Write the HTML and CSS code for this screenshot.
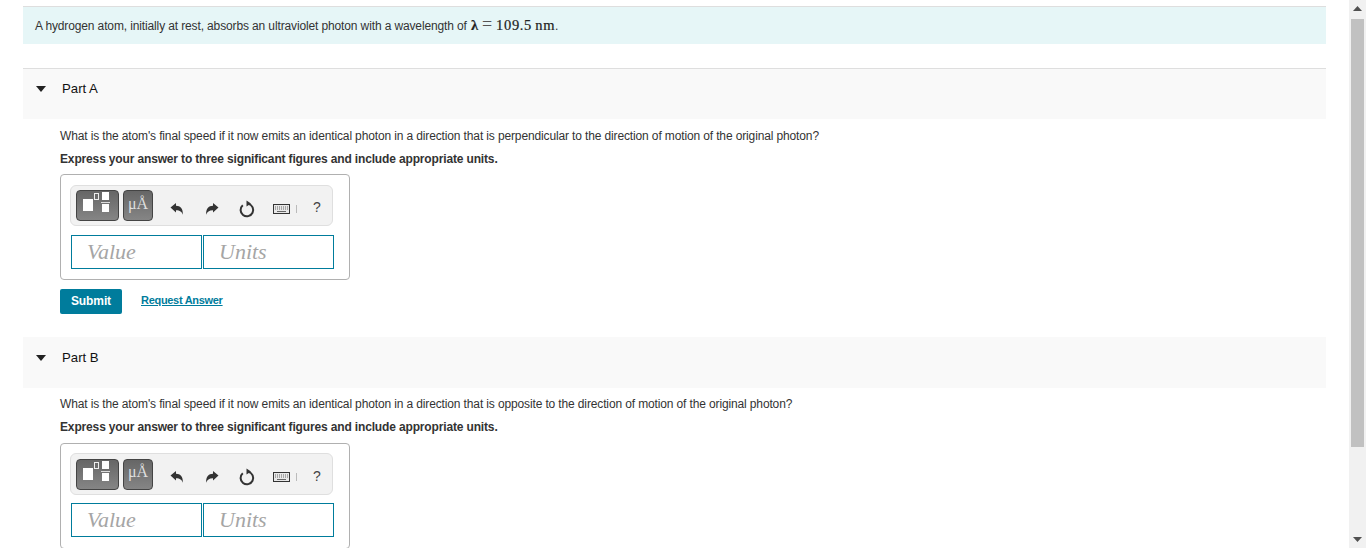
FILE: index.html
```html
<!DOCTYPE html>
<html lang="en">
<head>
<meta charset="utf-8">
<title>Hydrogen atom problem</title>
<link rel="stylesheet" href="styles.css">
</head>
<body>
<div class="page">
  <main class="content">
    <div class="intro">A hydrogen atom, initially at rest, absorbs an ultraviolet photon with a wavelength of <span class="math"><span class="lambda">λ</span> <span class="eq">=</span> 109.5 nm</span>.</div>

    <section class="part part-first">
      <header class="part-head">
        <svg class="caret" width="10" height="6" viewBox="0 0 10 6"><path d="M0 0H10L5 6Z"/></svg>
        <h2 class="part-title">Part A</h2>
      </header>
      <div class="part-body">
        <p class="question">What is the atom's final speed if it now emits an identical photon in a direction that is perpendicular to the direction of motion of the original photon?</p>
        <p class="instruction">Express your answer to three significant figures and include appropriate units.</p>
        <div class="answer-box">
          <div class="toolbar">
            <button class="tool tool-frac" type="button" aria-label="Templates">
              <svg width="34" height="24" viewBox="0 0 34 24"><rect x="2" y="8" width="10" height="12" fill="#fff"/><rect x="13.500" y="2.500" width="4" height="6" fill="none" stroke="#eee"/><rect x="21" y="1" width="7" height="8" fill="#fff"/><rect x="20" y="11" width="9" height="1" fill="#ddd"/><rect x="21" y="13" width="7" height="8" fill="#fff"/></svg>
            </button>
            <button class="tool tool-unit" type="button">μÅ</button>
            <svg class="ico ico-undo" width="14" height="14" viewBox="0 0 14 14"><path d="M0.500 5.500L6 1V3.800C10.500 3.800 13.200 6.500 12.800 12.800C11.800 9.800 10 8.300 6 8.300V10.500Z" fill="#333"/></svg>
            <svg class="ico ico-redo" width="14" height="14" viewBox="0 0 14 14"><path d="M13.500 5.500L8 1V3.800C3.500 3.800 0.800 6.500 1.200 12.800C2.200 9.800 4 8.300 8 8.300V10.500Z" fill="#333"/></svg>
            <svg class="ico ico-reset" width="16" height="18" viewBox="0 0 16 18"><path d="M9.500 3.900A6.300 6.300 0 1 1 3.800 5.200" fill="none" stroke="#333" stroke-width="2"/><path d="M7.500 0.500L12 3.500L7.500 6.500Z" fill="#333"/></svg>
            <svg class="ico ico-kbd" width="17" height="10" viewBox="0 0 17 10"><rect x="0.500" y="0.500" width="16" height="9" fill="#e8e8e8" stroke="#333"/><path d="M2 3H15M2 5H15" stroke="#666" stroke-dasharray="1 1"/><path d="M4 7.500H13" stroke="#666"/></svg>
            <span class="sep"></span>
            <span class="help">?</span>
          </div>
          <div class="fields">
            <div class="field">Value</div>
            <div class="field">Units</div>
          </div>
        </div>
        <div class="actions">
          <button class="submit" type="button">Submit</button>
          <a class="request" href="#">Request Answer</a>
        </div>
      </div>
    </section>

    <section class="part part-second">
      <header class="part-head">
        <svg class="caret" width="10" height="6" viewBox="0 0 10 6"><path d="M0 0H10L5 6Z"/></svg>
        <h2 class="part-title">Part B</h2>
      </header>
      <div class="part-body">
        <p class="question">What is the atom's final speed if it now emits an identical photon in a direction that is opposite to the direction of motion of the original photon?</p>
        <p class="instruction">Express your answer to three significant figures and include appropriate units.</p>
        <div class="answer-box">
          <div class="toolbar">
            <button class="tool tool-frac" type="button" aria-label="Templates">
              <svg width="34" height="24" viewBox="0 0 34 24"><rect x="2" y="8" width="10" height="12" fill="#fff"/><rect x="13.500" y="2.500" width="4" height="6" fill="none" stroke="#eee"/><rect x="21" y="1" width="7" height="8" fill="#fff"/><rect x="20" y="11" width="9" height="1" fill="#ddd"/><rect x="21" y="13" width="7" height="8" fill="#fff"/></svg>
            </button>
            <button class="tool tool-unit" type="button">μÅ</button>
            <svg class="ico ico-undo" width="14" height="14" viewBox="0 0 14 14"><path d="M0.500 5.500L6 1V3.800C10.500 3.800 13.200 6.500 12.800 12.800C11.800 9.800 10 8.300 6 8.300V10.500Z" fill="#333"/></svg>
            <svg class="ico ico-redo" width="14" height="14" viewBox="0 0 14 14"><path d="M13.500 5.500L8 1V3.800C3.500 3.800 0.800 6.500 1.200 12.800C2.200 9.800 4 8.300 8 8.300V10.500Z" fill="#333"/></svg>
            <svg class="ico ico-reset" width="16" height="18" viewBox="0 0 16 18"><path d="M9.500 3.900A6.300 6.300 0 1 1 3.800 5.200" fill="none" stroke="#333" stroke-width="2"/><path d="M7.500 0.500L12 3.500L7.500 6.500Z" fill="#333"/></svg>
            <svg class="ico ico-kbd" width="17" height="10" viewBox="0 0 17 10"><rect x="0.500" y="0.500" width="16" height="9" fill="#e8e8e8" stroke="#333"/><path d="M2 3H15M2 5H15" stroke="#666" stroke-dasharray="1 1"/><path d="M4 7.500H13" stroke="#666"/></svg>
            <span class="sep"></span>
            <span class="help">?</span>
          </div>
          <div class="fields">
            <div class="field">Value</div>
            <div class="field">Units</div>
          </div>
        </div>
      </div>
    </section>
  </main>
  <aside class="scrollbar" aria-hidden="true">
    <svg width="9" height="5" viewBox="0 0 9 5"><path d="M4.500 0L9 5H0Z" fill="#505050"/></svg>
    <div class="thumb"></div>
    <svg width="9" height="5" viewBox="0 0 9 5"><path d="M0 0H9L4.500 5Z" fill="#505050"/></svg>
  </aside>
</div>
</body>
</html>
```

FILE: styles.css
```css
* { box-sizing: border-box; }
html, body { margin: 0; padding: 0; height: 100%; overflow: hidden; background: #fff; }
body { font-family: "Liberation Sans", Arial, sans-serif; font-size: 12px; color: #333; }

.page { display: flex; height: 548px; }
.content { flex: 1; min-width: 0; height: 548px; overflow: hidden; padding: 6px 23px 0 23px; }

.intro { height: 38px; line-height: 38px; padding-left: 12px; background: #e6f6f7; border-top: 1px solid #dedede; color: #333; letter-spacing: -0.13px; }
.math { font-family: "Liberation Serif", "Times New Roman", serif; font-size: 14.500px; line-height: 1; color: #222; letter-spacing: 0.65px; word-spacing: -1px; -webkit-text-stroke: 0.2px #222; }
.lambda { font-weight: 700; margin-left: 1px; }
.eq { color: #555; -webkit-text-stroke: 0; font-size: 18px; line-height: 1; }

.part-first { margin-top: 24px; }
.part-second { margin-top: 23px; }
.part-head { display: flex; align-items: flex-start; height: 51px; background: #f9f9f9; padding-top: 12px; }
.part-second .part-head { padding-top: 13px; }
.part-first .part-head { border-top: 1px solid #dedede; }
.caret { fill: #222; margin: 5px 0 0 13px; }
.part-title { margin: 0 0 0 16px; font-size: 13.200px; line-height: 15px; font-weight: 400; color: #111; }

.part-body { padding: 9px 0 0 37px; }
.part-first .part-body { padding-top: 10px; }
.question { margin: 0; line-height: 15px; color: #333; letter-spacing: -0.133px; }
.instruction { margin: 8px 0 0; line-height: 15px; font-weight: 700; color: #333; letter-spacing: -0.15px; }

.answer-box { width: 290px; height: 106px; margin-top: 8px; padding: 10px 0 0 9px; border: 1px solid #b0b0b0; border-radius: 4px; background: #fff; }
.part-first .answer-box { margin-top: 7px; }
.part-second .answer-box { padding-top: 9px; }
.toolbar { display: flex; align-items: center; width: 263px; height: 41px; padding-left: 5px; background: #f2f2f2; border: 1px solid #dfdfdf; border-radius: 6px; }
.part-second .toolbar { height: 42px; }
.tool { display: flex; align-items: center; justify-content: center; height: 31px; padding: 0; border: 1px solid #444; border-radius: 4px; background: linear-gradient(#666, #858585); color: #dedede; }
.tool-frac { width: 43px; margin-right: 4px; padding-bottom: 5px; }
.tool-unit { width: 30px; font-family: "Liberation Serif", serif; font-size: 16px; padding-bottom: 4px; }
.ico { flex: none; margin-top: 6px; }
.ico-undo { margin-left: 17px; }
.ico-redo { margin-left: 21px; }
.ico-reset { margin-left: 20px; }
.ico-kbd { margin-left: 18px; }
.sep { width: 1px; height: 8px; margin: 6px 0 0 6px; background: #bbb; }
.help { margin: 3px 0 0 16px; font-size: 14px; color: #444; }

.fields { display: flex; gap: 1px; margin-top: 8px; margin-left: 1px; }
.part-first .fields { margin-top: 9px; }
.field { width: 131px; height: 34px; padding-left: 15px; border: 1px solid #007c9c; font-family: "Liberation Serif", serif; font-style: italic; font-size: 22px; line-height: 31px; color: #a5a5a5; }

.actions { display: flex; align-items: center; margin-top: 9px; }
.submit { width: 62px; height: 25px; padding: 0 0 1px; border: 0; border-radius: 2px; background: #007c9c; color: #fff; font-family: inherit; font-size: 12px; font-weight: 700; letter-spacing: -0.1px; }
.request { margin-left: 19px; margin-bottom: 3px; font-size: 11px; font-weight: 700; color: #007c9c; letter-spacing: -0.3px; }

.scrollbar { flex: none; display: flex; flex-direction: column; align-items: center; width: 17px; height: 548px; background: #f1f1f1; padding-top: 6px; }
.thumb { width: 13px; height: 428px; margin-top: 8px; background: #c1c1c1; }
.scrollbar svg:last-child { margin-top: auto; margin-bottom: 6px; }
```
